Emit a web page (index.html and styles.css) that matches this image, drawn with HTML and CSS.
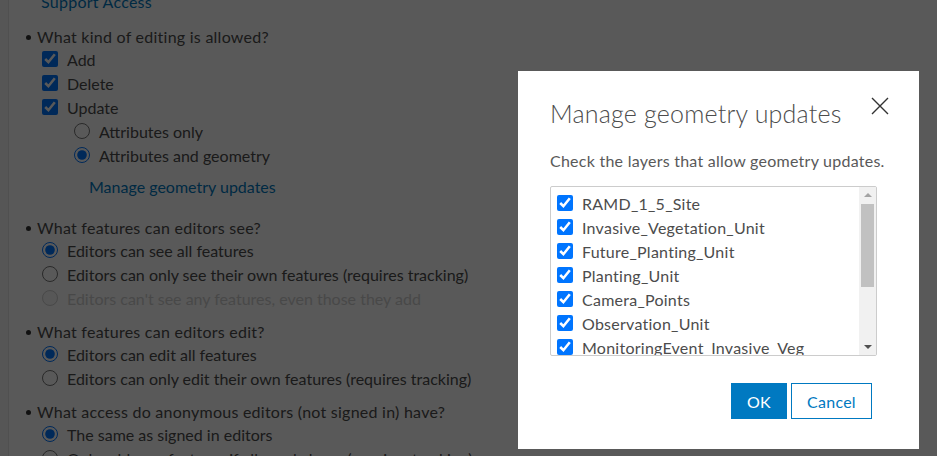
FILE: index.html
```html
<!DOCTYPE html>
<html lang="en">
<head>
    <meta charset="UTF-8">
    <meta name="viewport" content="width=device-width, initial-scale=1.0">
    <title>Collaboration settings</title>
    <link rel="stylesheet" href="styles.css">
</head>
<body>
    <div class="page">
        <div class="rail"></div>

        <!-- Editing settings -->
        <main class="settings">
            <a class="link support-link" href="#">Support Access</a>

            <ul class="questions">
                <li class="question">
                    <p class="q-title">What kind of editing is allowed?</p>
                    <label class="opt"><input type="checkbox" checked> Add</label>
                    <label class="opt"><input type="checkbox" checked> Delete</label>
                    <label class="opt"><input type="checkbox" checked> Update</label>
                    <div class="sub-opts">
                        <label class="opt"><input type="radio" name="update"> Attributes only</label>
                        <label class="opt"><input type="radio" name="update" checked> Attributes and geometry</label>
                        <a class="link geometry-link" href="#">Manage geometry updates</a>
                    </div>
                </li>
                <li class="question">
                    <p class="q-title">What features can editors see?</p>
                    <label class="opt"><input type="radio" name="see" checked> Editors can see all features</label>
                    <label class="opt"><input type="radio" name="see"> Editors can only see their own features (requires tracking)</label>
                    <label class="opt disabled"><input type="radio" name="see" disabled> Editors can't see any features, even those they add</label>
                </li>
                <li class="question">
                    <p class="q-title">What features can editors edit?</p>
                    <label class="opt"><input type="radio" name="edit" checked> Editors can edit all features</label>
                    <label class="opt"><input type="radio" name="edit"> Editors can only edit their own features (requires tracking)</label>
                </li>
                <li class="question">
                    <p class="q-title">What access do anonymous editors (not signed in) have?</p>
                    <label class="opt"><input type="radio" name="anon" checked> The same as signed in editors</label>
                    <label class="opt"><input type="radio" name="anon"> Only add new features if allowed above (requires tracking)</label>
                </li>
            </ul>
        </main>
    </div>

    <!-- Modal -->
    <div class="overlay"></div>
    <div class="modal">
        <div class="modal-header">
            <h2 class="modal-title">Manage geometry updates</h2>
            <button class="close-btn" aria-label="Close">
                <svg width="18" height="18" viewBox="0 0 18 18">
                    <path d="M1 1 L17 17 M17 1 L1 17" stroke="#333" stroke-width="1.4" fill="none"/>
                </svg>
            </button>
        </div>
        <p class="modal-text">Check the layers that allow geometry updates.</p>
        <div class="layer-box">
            <div class="layer-list">
                <label class="layer"><input type="checkbox" checked> RAMD_1_5_Site</label>
                <label class="layer"><input type="checkbox" checked> Invasive_Vegetation_Unit</label>
                <label class="layer"><input type="checkbox" checked> Future_Planting_Unit</label>
                <label class="layer"><input type="checkbox" checked> Planting_Unit</label>
                <label class="layer"><input type="checkbox" checked> Camera_Points</label>
                <label class="layer"><input type="checkbox" checked> Observation_Unit</label>
                <label class="layer"><input type="checkbox" checked> MonitoringEvent_Invasive_Veg</label>
                <label class="layer"><input type="checkbox" checked> MonitoringEvent_Planting</label>
                <label class="layer"><input type="checkbox" checked> Photo_Points</label>
            </div>
            <!-- scrollbar -->
            <div class="scrollbar">
                <span class="scroll-arrow up"></span>
                <div class="scroll-track"><div class="scroll-thumb"></div></div>
                <span class="scroll-arrow down"></span>
            </div>
        </div>
        <div class="modal-footer">
            <button class="btn btn-ok">OK</button>
            <button class="btn btn-cancel">Cancel</button>
        </div>
    </div>
</body>
</html>
```

FILE: styles.css
```css
body {
    margin: 0;
    font-family: Lato, 'Noto Sans', sans-serif;
    font-size: 16px;
    letter-spacing: 0.25px;
    color: #4c4c4c;
    background: #fff;
    overflow: hidden;
}

.page {
    display: flex;
    min-height: 100vh;
}

.rail {
    width: 8px;
    background: #f7f7f7;
    border-right: 1px solid #e6e6e6;
}

.settings {
    flex: 1;
    margin-top: -10px;
    padding-left: 20px;
}

.link {
    color: #0079c1;
    text-decoration: none;
    line-height: 24px;
}

.support-link {
    display: block;
    padding-left: 12px;
}

.questions {
    list-style: none;
    margin: 0;
    padding: 0;
}

.question {
    margin-top: 11px;
}

.question:first-child {
    margin-top: 12px;
}

.q-title {
    margin: 0;
    line-height: 21px;
    position: relative;
    padding-left: 8px;
}

/* round bullet in front of each question */
.q-title::before {
    content: "";
    position: absolute;
    left: -3px;
    top: 9px;
    width: 5px;
    height: 5px;
    border-radius: 50%;
    background: #333;
}

.opt {
    display: flex;
    align-items: center;
    height: 24px;
    padding-left: 13px;
    gap: 9px;
    letter-spacing: 0;
}

.opt input {
    width: 16px;
    height: 16px;
    margin: 0;
}

.opt.disabled {
    color: #cfcfcf;
}

.sub-opts {
    padding-left: 32px;
}

.geometry-link {
    display: block;
    padding: 8px 0 7px 28px;
    letter-spacing: 0;
}

.overlay {
    position: fixed;
    inset: 0;
    background: rgba(0, 0, 0, 0.65);
}

.modal {
    position: fixed;
    left: 518px;
    top: 71px;
    width: 401px;
    height: 378px;
    background: #fff;
    box-sizing: border-box;
    padding: 0 42px 0 32px;
}

.modal-header {
    display: flex;
    justify-content: space-between;
    align-items: flex-start;
    padding-top: 27px;
}

.modal-title {
    margin: 0;
    font-size: 25px;
    font-weight: 300;
    letter-spacing: 0.2px;
    line-height: 30px;
    color: #4c4c4c;
}

.close-btn {
    background: none;
    border: none;
    padding: 0;
    margin: -1px -12px 0 0;
    cursor: pointer;
    line-height: 0;
}

.modal-text {
    margin: 23px 0 0;
    line-height: 20px;
    color: #595959;
    white-space: nowrap;
}

.layer-box {
    display: flex;
    margin-top: 15px;
    height: 170px;
    border: 1px solid #ccc;
    border-radius: 2px;
    box-sizing: border-box;
    overflow: hidden;
}

.layer-list {
    flex: 1;
    overflow: hidden;
    padding-top: 4px;
}

.layer {
    display: flex;
    align-items: center;
    height: 24px;
    padding-left: 6px;
    gap: 9px;
    white-space: nowrap;
}

.layer input {
    width: 16px;
    height: 16px;
    margin: 0;
}

.scrollbar {
    width: 17px;
    background: #f1f1f1;
    display: flex;
    flex-direction: column;
}

.scroll-arrow {
    height: 16px;
    display: flex;
    align-items: center;
    justify-content: center;
}

.scroll-arrow::before {
    content: "";
    border-left: 4px solid transparent;
    border-right: 4px solid transparent;
}

.scroll-arrow.up::before {
    border-bottom: 4px solid #a3a3a3;
}

.scroll-arrow.down::before {
    border-top: 4px solid #505050;
}

.scroll-track {
    flex: 1;
    padding: 1px 2px 0;
}

.scroll-thumb {
    height: 83px;
    background: #c1c1c1;
}

.modal-footer {
    display: flex;
    justify-content: flex-end;
    gap: 4px;
    margin-top: 27px;
    margin-right: 5px;
}

.btn {
    height: 36px;
    font-family: inherit;
    font-size: 16px;
    letter-spacing: 0.25px;
    border: 1px solid #0079c1;
    cursor: pointer;
    padding: 0;
}

.btn-ok {
    width: 56px;
    background: #0079c1;
    color: #fff;
}

.btn-cancel {
    width: 81px;
    background: #fff;
    color: #0079c1;
}
```
